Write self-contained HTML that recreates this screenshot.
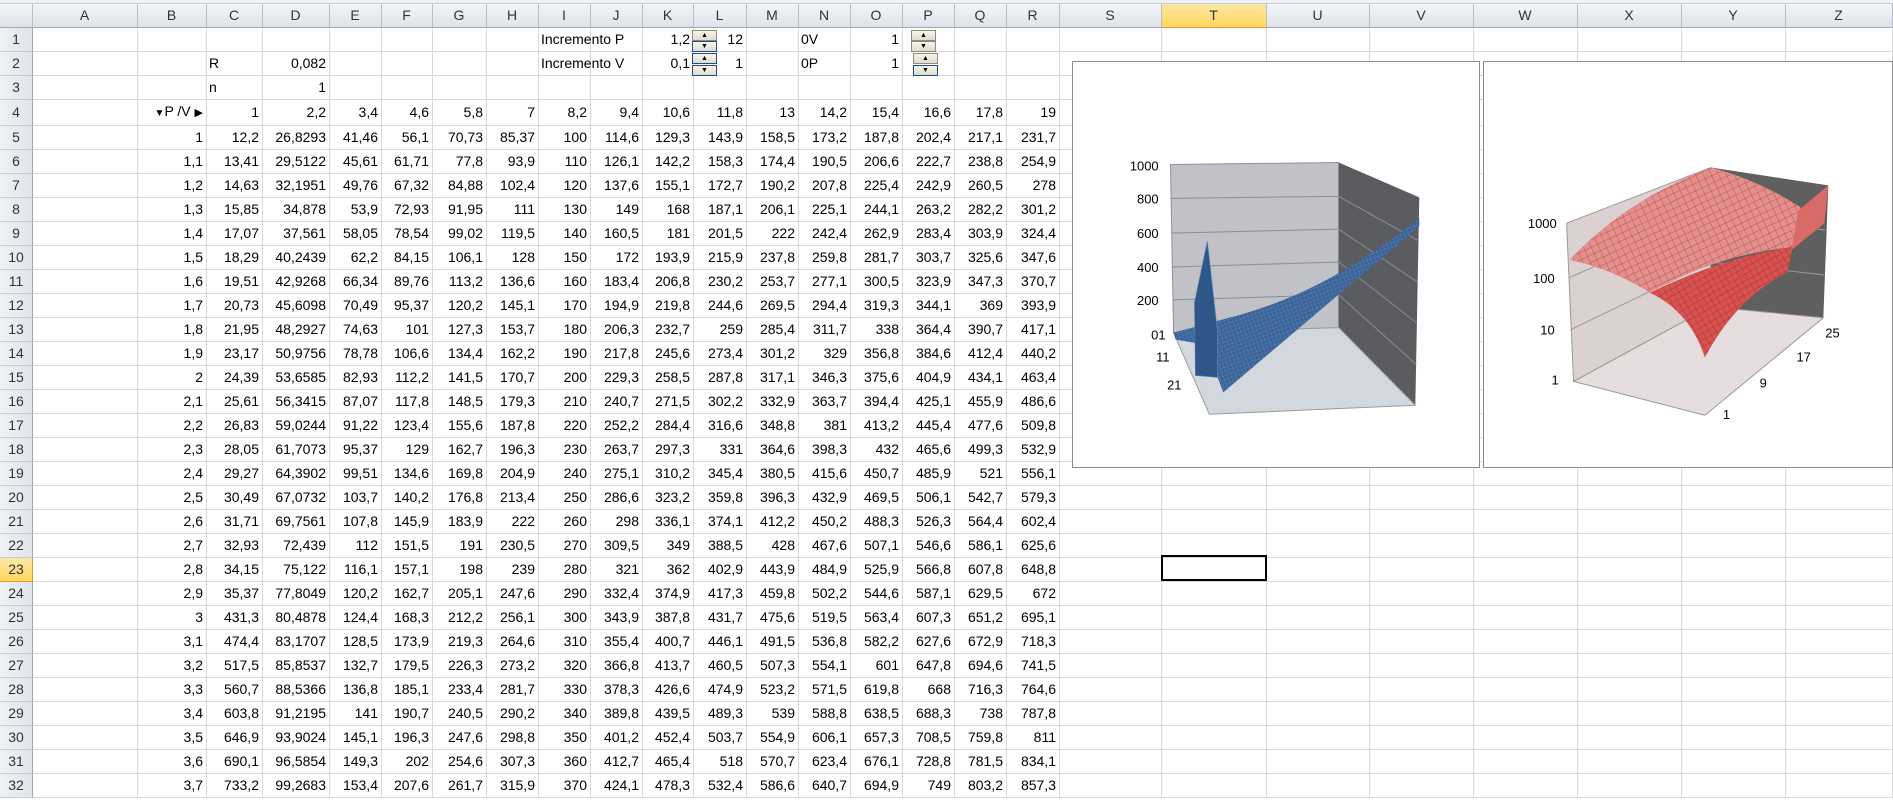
<!DOCTYPE html>
<html><head><meta charset="utf-8"><style>
body{margin:0;width:1893px;height:800px;overflow:hidden;background:#fff;font-family:"Liberation Sans",Arial,sans-serif;position:relative}
#top{position:absolute;left:0;top:0;width:1893px;height:4px;background:#eef1f5;border-bottom:1px solid #c5cbd3;box-sizing:border-box}
table{position:absolute;left:0;top:4px;border-collapse:separate;border-spacing:0;table-layout:fixed;width:1893px;font-size:14px}
td{height:24px;box-sizing:border-box;border-right:1px solid #d9d9d9;border-bottom:1px solid #d9d9d9;padding:0 3px 0 2px;text-align:right;white-space:nowrap;overflow:visible;color:#000;line-height:23px}
tr.h td{background:linear-gradient(#f3f5f8,#dfe3e9);color:#333;text-align:center;border-right:1px solid #b9bfc7;border-bottom:1px solid #9fa7b2}
td.r{background:linear-gradient(90deg,#eef1f5,#e1e5eb);color:#333;text-align:center;border-right:1px solid #9fa7b2;border-bottom:1px solid #c5cbd3;padding:0}
td.l{text-align:left}
.sel{background:linear-gradient(#fde9a6,#ffd65c)!important;border-bottom:1px solid #d79a32!important}
td.r.sel{border-right:1px solid #d79a32!important}
.chart{position:absolute;background:#fff;border:1px solid #8c8c8c;box-sizing:border-box}
.spin{position:absolute;width:25px;height:11px;background:linear-gradient(#f6f4ec,#e0dccd);border:1px solid #8d8a80;box-sizing:border-box;font-size:7px;line-height:9px;text-align:center;color:#000}
.spin.b{border-color:#1f4f8a}
#cur{position:absolute;left:1161px;top:555px;width:106px;height:26px;border:2px solid #000;box-sizing:border-box}
</style></head><body>
<div id="top"></div>
<table>
<colgroup><col style="width:33px"><col style="width:105px"><col style="width:69px"><col style="width:56px"><col style="width:67px"><col style="width:52px"><col style="width:51px"><col style="width:54px"><col style="width:52px"><col style="width:52px"><col style="width:52px"><col style="width:51px"><col style="width:53px"><col style="width:52px"><col style="width:52px"><col style="width:52px"><col style="width:52px"><col style="width:52px"><col style="width:53px"><col style="width:102px"><col style="width:105px"><col style="width:103px"><col style="width:104px"><col style="width:104px"><col style="width:104px"><col style="width:104px"><col style="width:107px"></colgroup>
<tr class="h"><td></td><td>A</td><td>B</td><td>C</td><td>D</td><td>E</td><td>F</td><td>G</td><td>H</td><td>I</td><td>J</td><td>K</td><td>L</td><td>M</td><td>N</td><td>O</td><td>P</td><td>Q</td><td>R</td><td>S</td><td class="sel">T</td><td>U</td><td>V</td><td>W</td><td>X</td><td>Y</td><td>Z</td></tr>
<tr><td class="r">1</td><td></td><td></td><td></td><td></td><td></td><td></td><td></td><td></td><td class="l" style="overflow:visible">Incremento P</td><td></td><td>1,2</td><td>12</td><td></td><td class="l">0V</td><td>1</td><td></td><td></td><td></td><td></td><td></td><td></td><td></td><td></td><td></td><td></td><td></td></tr>
<tr><td class="r">2</td><td></td><td></td><td class="l">R</td><td>0,082</td><td></td><td></td><td></td><td></td><td class="l">Incremento V</td><td></td><td>0,1</td><td>1</td><td></td><td class="l">0P</td><td>1</td><td></td><td></td><td></td><td></td><td></td><td></td><td></td><td></td><td></td><td></td><td></td></tr>
<tr><td class="r">3</td><td></td><td></td><td class="l">n</td><td>1</td><td></td><td></td><td></td><td></td><td></td><td></td><td></td><td></td><td></td><td></td><td></td><td></td><td></td><td></td><td></td><td></td><td></td><td></td><td></td><td></td><td></td><td></td></tr>
<tr><td class="r">4</td><td></td><td><span style="font-size:10px">▼</span>P /V <span style="font-size:11px">▶</span></td><td>1</td><td>2,2</td><td>3,4</td><td>4,6</td><td>5,8</td><td>7</td><td>8,2</td><td>9,4</td><td>10,6</td><td>11,8</td><td>13</td><td>14,2</td><td>15,4</td><td>16,6</td><td>17,8</td><td>19</td><td></td><td></td><td></td><td></td><td></td><td></td><td></td><td></td></tr>
<tr><td class="r">5</td><td></td><td>1</td><td>12,2</td><td>26,8293</td><td>41,46</td><td>56,1</td><td>70,73</td><td>85,37</td><td>100</td><td>114,6</td><td>129,3</td><td>143,9</td><td>158,5</td><td>173,2</td><td>187,8</td><td>202,4</td><td>217,1</td><td>231,7</td><td></td><td></td><td></td><td></td><td></td><td></td><td></td><td></td></tr>
<tr><td class="r">6</td><td></td><td>1,1</td><td>13,41</td><td>29,5122</td><td>45,61</td><td>61,71</td><td>77,8</td><td>93,9</td><td>110</td><td>126,1</td><td>142,2</td><td>158,3</td><td>174,4</td><td>190,5</td><td>206,6</td><td>222,7</td><td>238,8</td><td>254,9</td><td></td><td></td><td></td><td></td><td></td><td></td><td></td><td></td></tr>
<tr><td class="r">7</td><td></td><td>1,2</td><td>14,63</td><td>32,1951</td><td>49,76</td><td>67,32</td><td>84,88</td><td>102,4</td><td>120</td><td>137,6</td><td>155,1</td><td>172,7</td><td>190,2</td><td>207,8</td><td>225,4</td><td>242,9</td><td>260,5</td><td>278</td><td></td><td></td><td></td><td></td><td></td><td></td><td></td><td></td></tr>
<tr><td class="r">8</td><td></td><td>1,3</td><td>15,85</td><td>34,878</td><td>53,9</td><td>72,93</td><td>91,95</td><td>111</td><td>130</td><td>149</td><td>168</td><td>187,1</td><td>206,1</td><td>225,1</td><td>244,1</td><td>263,2</td><td>282,2</td><td>301,2</td><td></td><td></td><td></td><td></td><td></td><td></td><td></td><td></td></tr>
<tr><td class="r">9</td><td></td><td>1,4</td><td>17,07</td><td>37,561</td><td>58,05</td><td>78,54</td><td>99,02</td><td>119,5</td><td>140</td><td>160,5</td><td>181</td><td>201,5</td><td>222</td><td>242,4</td><td>262,9</td><td>283,4</td><td>303,9</td><td>324,4</td><td></td><td></td><td></td><td></td><td></td><td></td><td></td><td></td></tr>
<tr><td class="r">10</td><td></td><td>1,5</td><td>18,29</td><td>40,2439</td><td>62,2</td><td>84,15</td><td>106,1</td><td>128</td><td>150</td><td>172</td><td>193,9</td><td>215,9</td><td>237,8</td><td>259,8</td><td>281,7</td><td>303,7</td><td>325,6</td><td>347,6</td><td></td><td></td><td></td><td></td><td></td><td></td><td></td><td></td></tr>
<tr><td class="r">11</td><td></td><td>1,6</td><td>19,51</td><td>42,9268</td><td>66,34</td><td>89,76</td><td>113,2</td><td>136,6</td><td>160</td><td>183,4</td><td>206,8</td><td>230,2</td><td>253,7</td><td>277,1</td><td>300,5</td><td>323,9</td><td>347,3</td><td>370,7</td><td></td><td></td><td></td><td></td><td></td><td></td><td></td><td></td></tr>
<tr><td class="r">12</td><td></td><td>1,7</td><td>20,73</td><td>45,6098</td><td>70,49</td><td>95,37</td><td>120,2</td><td>145,1</td><td>170</td><td>194,9</td><td>219,8</td><td>244,6</td><td>269,5</td><td>294,4</td><td>319,3</td><td>344,1</td><td>369</td><td>393,9</td><td></td><td></td><td></td><td></td><td></td><td></td><td></td><td></td></tr>
<tr><td class="r">13</td><td></td><td>1,8</td><td>21,95</td><td>48,2927</td><td>74,63</td><td>101</td><td>127,3</td><td>153,7</td><td>180</td><td>206,3</td><td>232,7</td><td>259</td><td>285,4</td><td>311,7</td><td>338</td><td>364,4</td><td>390,7</td><td>417,1</td><td></td><td></td><td></td><td></td><td></td><td></td><td></td><td></td></tr>
<tr><td class="r">14</td><td></td><td>1,9</td><td>23,17</td><td>50,9756</td><td>78,78</td><td>106,6</td><td>134,4</td><td>162,2</td><td>190</td><td>217,8</td><td>245,6</td><td>273,4</td><td>301,2</td><td>329</td><td>356,8</td><td>384,6</td><td>412,4</td><td>440,2</td><td></td><td></td><td></td><td></td><td></td><td></td><td></td><td></td></tr>
<tr><td class="r">15</td><td></td><td>2</td><td>24,39</td><td>53,6585</td><td>82,93</td><td>112,2</td><td>141,5</td><td>170,7</td><td>200</td><td>229,3</td><td>258,5</td><td>287,8</td><td>317,1</td><td>346,3</td><td>375,6</td><td>404,9</td><td>434,1</td><td>463,4</td><td></td><td></td><td></td><td></td><td></td><td></td><td></td><td></td></tr>
<tr><td class="r">16</td><td></td><td>2,1</td><td>25,61</td><td>56,3415</td><td>87,07</td><td>117,8</td><td>148,5</td><td>179,3</td><td>210</td><td>240,7</td><td>271,5</td><td>302,2</td><td>332,9</td><td>363,7</td><td>394,4</td><td>425,1</td><td>455,9</td><td>486,6</td><td></td><td></td><td></td><td></td><td></td><td></td><td></td><td></td></tr>
<tr><td class="r">17</td><td></td><td>2,2</td><td>26,83</td><td>59,0244</td><td>91,22</td><td>123,4</td><td>155,6</td><td>187,8</td><td>220</td><td>252,2</td><td>284,4</td><td>316,6</td><td>348,8</td><td>381</td><td>413,2</td><td>445,4</td><td>477,6</td><td>509,8</td><td></td><td></td><td></td><td></td><td></td><td></td><td></td><td></td></tr>
<tr><td class="r">18</td><td></td><td>2,3</td><td>28,05</td><td>61,7073</td><td>95,37</td><td>129</td><td>162,7</td><td>196,3</td><td>230</td><td>263,7</td><td>297,3</td><td>331</td><td>364,6</td><td>398,3</td><td>432</td><td>465,6</td><td>499,3</td><td>532,9</td><td></td><td></td><td></td><td></td><td></td><td></td><td></td><td></td></tr>
<tr><td class="r">19</td><td></td><td>2,4</td><td>29,27</td><td>64,3902</td><td>99,51</td><td>134,6</td><td>169,8</td><td>204,9</td><td>240</td><td>275,1</td><td>310,2</td><td>345,4</td><td>380,5</td><td>415,6</td><td>450,7</td><td>485,9</td><td>521</td><td>556,1</td><td></td><td></td><td></td><td></td><td></td><td></td><td></td><td></td></tr>
<tr><td class="r">20</td><td></td><td>2,5</td><td>30,49</td><td>67,0732</td><td>103,7</td><td>140,2</td><td>176,8</td><td>213,4</td><td>250</td><td>286,6</td><td>323,2</td><td>359,8</td><td>396,3</td><td>432,9</td><td>469,5</td><td>506,1</td><td>542,7</td><td>579,3</td><td></td><td></td><td></td><td></td><td></td><td></td><td></td><td></td></tr>
<tr><td class="r">21</td><td></td><td>2,6</td><td>31,71</td><td>69,7561</td><td>107,8</td><td>145,9</td><td>183,9</td><td>222</td><td>260</td><td>298</td><td>336,1</td><td>374,1</td><td>412,2</td><td>450,2</td><td>488,3</td><td>526,3</td><td>564,4</td><td>602,4</td><td></td><td></td><td></td><td></td><td></td><td></td><td></td><td></td></tr>
<tr><td class="r">22</td><td></td><td>2,7</td><td>32,93</td><td>72,439</td><td>112</td><td>151,5</td><td>191</td><td>230,5</td><td>270</td><td>309,5</td><td>349</td><td>388,5</td><td>428</td><td>467,6</td><td>507,1</td><td>546,6</td><td>586,1</td><td>625,6</td><td></td><td></td><td></td><td></td><td></td><td></td><td></td><td></td></tr>
<tr><td class="r sel">23</td><td></td><td>2,8</td><td>34,15</td><td>75,122</td><td>116,1</td><td>157,1</td><td>198</td><td>239</td><td>280</td><td>321</td><td>362</td><td>402,9</td><td>443,9</td><td>484,9</td><td>525,9</td><td>566,8</td><td>607,8</td><td>648,8</td><td></td><td></td><td></td><td></td><td></td><td></td><td></td><td></td></tr>
<tr><td class="r">24</td><td></td><td>2,9</td><td>35,37</td><td>77,8049</td><td>120,2</td><td>162,7</td><td>205,1</td><td>247,6</td><td>290</td><td>332,4</td><td>374,9</td><td>417,3</td><td>459,8</td><td>502,2</td><td>544,6</td><td>587,1</td><td>629,5</td><td>672</td><td></td><td></td><td></td><td></td><td></td><td></td><td></td><td></td></tr>
<tr><td class="r">25</td><td></td><td>3</td><td>431,3</td><td>80,4878</td><td>124,4</td><td>168,3</td><td>212,2</td><td>256,1</td><td>300</td><td>343,9</td><td>387,8</td><td>431,7</td><td>475,6</td><td>519,5</td><td>563,4</td><td>607,3</td><td>651,2</td><td>695,1</td><td></td><td></td><td></td><td></td><td></td><td></td><td></td><td></td></tr>
<tr><td class="r">26</td><td></td><td>3,1</td><td>474,4</td><td>83,1707</td><td>128,5</td><td>173,9</td><td>219,3</td><td>264,6</td><td>310</td><td>355,4</td><td>400,7</td><td>446,1</td><td>491,5</td><td>536,8</td><td>582,2</td><td>627,6</td><td>672,9</td><td>718,3</td><td></td><td></td><td></td><td></td><td></td><td></td><td></td><td></td></tr>
<tr><td class="r">27</td><td></td><td>3,2</td><td>517,5</td><td>85,8537</td><td>132,7</td><td>179,5</td><td>226,3</td><td>273,2</td><td>320</td><td>366,8</td><td>413,7</td><td>460,5</td><td>507,3</td><td>554,1</td><td>601</td><td>647,8</td><td>694,6</td><td>741,5</td><td></td><td></td><td></td><td></td><td></td><td></td><td></td><td></td></tr>
<tr><td class="r">28</td><td></td><td>3,3</td><td>560,7</td><td>88,5366</td><td>136,8</td><td>185,1</td><td>233,4</td><td>281,7</td><td>330</td><td>378,3</td><td>426,6</td><td>474,9</td><td>523,2</td><td>571,5</td><td>619,8</td><td>668</td><td>716,3</td><td>764,6</td><td></td><td></td><td></td><td></td><td></td><td></td><td></td><td></td></tr>
<tr><td class="r">29</td><td></td><td>3,4</td><td>603,8</td><td>91,2195</td><td>141</td><td>190,7</td><td>240,5</td><td>290,2</td><td>340</td><td>389,8</td><td>439,5</td><td>489,3</td><td>539</td><td>588,8</td><td>638,5</td><td>688,3</td><td>738</td><td>787,8</td><td></td><td></td><td></td><td></td><td></td><td></td><td></td><td></td></tr>
<tr><td class="r">30</td><td></td><td>3,5</td><td>646,9</td><td>93,9024</td><td>145,1</td><td>196,3</td><td>247,6</td><td>298,8</td><td>350</td><td>401,2</td><td>452,4</td><td>503,7</td><td>554,9</td><td>606,1</td><td>657,3</td><td>708,5</td><td>759,8</td><td>811</td><td></td><td></td><td></td><td></td><td></td><td></td><td></td><td></td></tr>
<tr><td class="r">31</td><td></td><td>3,6</td><td>690,1</td><td>96,5854</td><td>149,3</td><td>202</td><td>254,6</td><td>307,3</td><td>360</td><td>412,7</td><td>465,4</td><td>518</td><td>570,7</td><td>623,4</td><td>676,1</td><td>728,8</td><td>781,5</td><td>834,1</td><td></td><td></td><td></td><td></td><td></td><td></td><td></td><td></td></tr>
<tr><td class="r">32</td><td></td><td>3,7</td><td>733,2</td><td>99,2683</td><td>153,4</td><td>207,6</td><td>261,7</td><td>315,9</td><td>370</td><td>424,1</td><td>478,3</td><td>532,4</td><td>586,6</td><td>640,7</td><td>694,9</td><td>749</td><td>803,2</td><td>857,3</td><td></td><td></td><td></td><td></td><td></td><td></td><td></td><td></td></tr>
</table>

<div class="spin" style="left:692px;top:30px">▲</div><div class="spin b" style="left:692px;top:41px">▼</div>
<div class="spin b" style="left:692px;top:53px">▲</div><div class="spin b" style="left:692px;top:65px">▼</div>
<div class="spin" style="left:911px;top:30px">▲</div><div class="spin" style="left:911px;top:41px">▼</div>
<div class="spin" style="left:913px;top:53px">▲</div><div class="spin b" style="left:913px;top:65px">▼</div>

<div id="cur"></div>

<svg class="chart" style="left:1072px;top:61px" width="408" height="407" viewBox="1072 61 408 407" font-family="Liberation Sans, sans-serif" font-size="13" fill="#000">
<defs><pattern id="bm" width="4" height="4" patternUnits="userSpaceOnUse" patternTransform="rotate(-20)"><rect width="4" height="4" fill="#3a6398"/><path d="M0 0H4M0 0V4" stroke="#6f93c2" stroke-width=".6"/></pattern></defs>
<polygon points="1170,164 1339,162 1339,328 1173,333" fill="#c0c2c8" stroke="#8f9196"/>
<polygon points="1339,162 1420,197 1416,406 1339,328" fill="#5b5c60"/>
<polygon points="1173,333 1339,328 1416,406 1209,415" fill="#d3d7de" stroke="#9a9ca0"/>
<g stroke="#8a8c90" stroke-width="1">
<line x1="1170" y1="198" x2="1339" y2="196"/><line x1="1339" y1="196" x2="1418" y2="240"/>
<line x1="1171" y1="233" x2="1339" y2="229"/><line x1="1339" y1="229" x2="1418" y2="282"/>
<line x1="1172" y1="267" x2="1339" y2="262"/><line x1="1339" y1="262" x2="1417" y2="323"/>
<line x1="1172" y1="300" x2="1339" y2="295"/><line x1="1339" y1="295" x2="1417" y2="365"/>
</g>
<path d="M1173,333 L1240,315 Q1330,290 1420,218 L1420,226 L1223,393 L1205,345 L1175,340Z" fill="url(#bm)"/>
<polygon points="1194,303 1207,241 1217,330 1217,378 1195,376" fill="#2f5688" stroke="#5b83b5" stroke-width=".6"/>
<g text-anchor="end"><text x="1158" y="170">1000</text><text x="1158" y="203">800</text><text x="1158" y="238">600</text><text x="1158" y="272">400</text><text x="1158" y="305">200</text><text x="1165" y="340">01</text><text x="1169" y="362">11</text><text x="1181" y="390">21</text></g>
</svg>

<svg class="chart" style="left:1483px;top:61px" width="410" height="407" viewBox="1483 61 410 407" font-family="Liberation Sans, sans-serif" font-size="13" fill="#000">
<defs>
<pattern id="rt" width="7" height="7" patternUnits="userSpaceOnUse" patternTransform="rotate(-25)"><rect width="7" height="7" fill="#e58f8d"/><path d="M0 0H7M0 0V7" stroke="#a3423f" stroke-width=".7"/></pattern>
<pattern id="rf" width="6" height="6" patternUnits="userSpaceOnUse" patternTransform="rotate(-30)"><rect width="6" height="6" fill="#d9524f"/><path d="M0 0H6M0 0V6" stroke="#932f2d" stroke-width=".7"/></pattern>
</defs>
<polygon points="1566,223 1711,167 1711,307 1573,382" fill="#dbd1d1" stroke="#9c9696"/>
<polygon points="1711,167 1829,185 1824,318 1711,307" fill="#5f5f60"/>
<polygon points="1573,382 1711,307 1824,318 1705,416" fill="#e6dede" stroke="#9c9696"/>
<g stroke="#9a9a9a"><line x1="1568" y1="278" x2="1711" y2="215"/><line x1="1570" y1="330" x2="1711" y2="262"/><line x1="1711" y1="215" x2="1826" y2="230"/><line x1="1711" y1="262" x2="1825" y2="275"/></g>
<path d="M1650,293 Q1720,258 1793,247 L1788,272 Q1735,300 1705,358 Q1690,312 1650,293Z" fill="url(#rf)"/>
<path d="M1569,260 Q1625,200 1711,167 Q1760,180 1801,207 L1793,247 Q1715,255 1650,293 Q1610,268 1569,260Z" fill="url(#rt)"/>
<polygon points="1799,210 1829,185 1825,223 1792,250" fill="#d86a68"/>
<g text-anchor="end"><text x="1556" y="228">1000</text><text x="1554" y="283">100</text><text x="1554" y="335">10</text><text x="1558" y="385">1</text></g>
<text x="1826" y="338">25</text><text x="1797" y="362">17</text><text x="1760" y="388">9</text><text x="1723" y="420">1</text>
</svg>
</body></html>
